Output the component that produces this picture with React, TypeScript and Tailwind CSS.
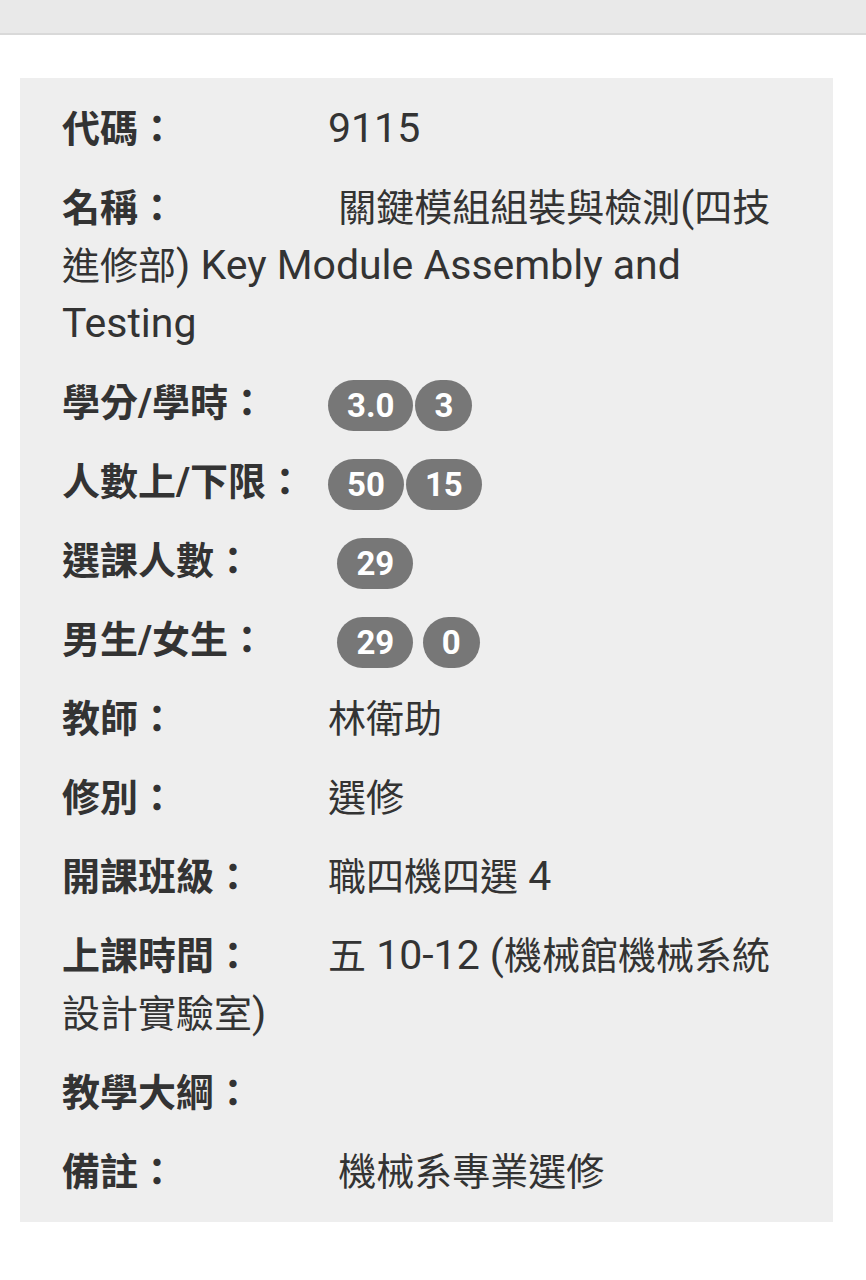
import React from "react";

const L = ({ children }: { children: React.ReactNode }) => (
  <span className="text-[41px] leading-none">{children}</span>
);

const Badge = ({ children }: { children: React.ReactNode }) => (
  <span className="inline-block rounded-full bg-[#777777] px-[19px] py-[9px] align-middle text-[33px] font-bold leading-none text-white">
    {children}
  </span>
);

const Row = ({ label, children }: { label: string; children?: React.ReactNode }) => (
  <div>
    <span className="inline-block w-[266px] font-bold">{label}</span>
    {children}
  </div>
);

export default function App() {
  return (
    <div
      className="min-h-[1280px] w-[866px] bg-white text-[#333333]"
      style={{ fontFamily: 'Roboto, "Noto Sans CJK TC", sans-serif' }}
    >
      <div className="h-[35px] border-b-[2px] border-[#d9d9d9] bg-[#e9e9e9]" />
      <div className="pt-[43px]">
        <div className="ml-[20px] flex w-[813px] flex-col gap-[21px] bg-[#eeeeee] px-[42px] pt-[22px] pb-[21px] text-[38px] leading-[58px]">
          <Row label="代碼："><L>9115</L></Row>
          <Row label="名稱：">
            <L> </L>關鍵模組組裝與檢測<L>(</L>四技進修部<L>) Key Module Assembly and Testing</L>
          </Row>
          <Row label="學分/學時：">
            <span className="inline-flex gap-[2px] align-middle">
              <Badge>3.0</Badge>
              <Badge>3</Badge>
            </span>
          </Row>
          <Row label="人數上/下限：">
            <span className="inline-flex gap-[2px] align-middle">
              <Badge>50</Badge>
              <Badge>15</Badge>
            </span>
          </Row>
          <Row label="選課人數：">
            {" "}
            <Badge>29</Badge>
          </Row>
          <Row label="男生/女生：">
            {" "}
            <Badge>29</Badge> <Badge>0</Badge>
          </Row>
          <Row label="教師：">林衛助</Row>
          <Row label="修別：">選修</Row>
          <Row label="開課班級：">職四機四選<L> 4</L></Row>
          <Row label="上課時間：">
            五<L> 10-12 (</L>機械館機械系統設計實驗室<L>)</L>
          </Row>
          <Row label="教學大綱：" />
          <Row label="備註："><L> </L>機械系專業選修</Row>
        </div>
      </div>
    </div>
  );
}
